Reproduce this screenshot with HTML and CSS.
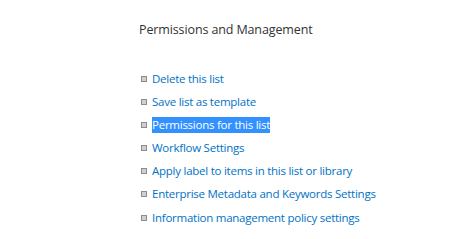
FILE: index.html
```html
<!DOCTYPE html>
<html lang="en">
<head>
    <meta charset="UTF-8">
    <title>Permissions and Management</title>
    <link rel="stylesheet" href="styles.css">
</head>
<body>
    <div class="settings-column">
        <h3 class="settings-title">Permissions and Management</h3>
        <ul class="settings-links">
            <li><a href="#">Delete this list</a></li>
            <li><a href="#">Save list as template</a></li>
            <li><a href="#" class="selected">Permissions for this list</a></li>
            <li><a href="#">Workflow Settings</a></li>
            <li><a href="#">Apply label to items in this list or library</a></li>
            <li><a href="#">Enterprise Metadata and Keywords Settings</a></li>
            <li><a href="#">Information management policy settings</a></li>
        </ul>
    </div>
</body>
</html>
```

FILE: styles.css
```css
body {
    margin: 0;
    padding: 0;
    background-color: white;
    font-family: "Open Sans", "Noto Sans", sans-serif;
}

.settings-column {
    padding: 20px 0 0 139px;
}

.settings-title {
    margin: 0 0 27px 0;
    font-size: 12.5px;
    font-weight: normal;
    letter-spacing: -0.12px;
    color: #333;
    line-height: 20px;
}

.settings-links {
    list-style-type: none;
    margin: 0;
    padding: 0;
}

.settings-links li {
    display: flex;
    align-items: center;
    height: 23.17px;
    font-size: 11.5px;
    letter-spacing: -0.25px;
}

.settings-links li::before {
    content: "";
    width: 4px;
    height: 4px;
    margin: 0 5px 0 2px;
    background-color: #cfcfcf;
    border: 1px solid #8c8c8c;
}

.settings-links a {
    color: #0072c6;
    text-decoration: none;
    line-height: 16px;
}

.settings-links a.selected {
    background-color: #3390ff;
    color: white;
}
```
